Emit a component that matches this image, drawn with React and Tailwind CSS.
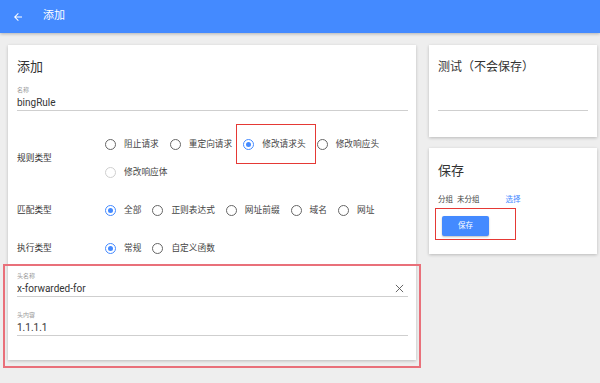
import React from "react";

const Radio = ({ checked, disabled }) => (
  <span
    className={
      checked
        ? "w-[11px] h-[11px] rounded-full border-[1.3px] border-[#448aff] flex items-center justify-center shrink-0"
        : disabled
        ? "w-[11px] h-[11px] rounded-full border-[1.3px] border-[#cfcfcf] flex items-center justify-center shrink-0"
        : "w-[11px] h-[11px] rounded-full border-[1.3px] border-[#666666] flex items-center justify-center shrink-0"
    }
  >
    {checked && <span className="w-[5px] h-[5px] rounded-full bg-[#448aff]" />}
  </span>
);

const RadioItem = ({ label, checked, disabled }) => (
  <div className="flex items-center h-[28px] mr-[11px]">
    <Radio checked={checked} disabled={disabled} />
    <span className="ml-[8px] text-[8.7px] leading-[12px] text-[#444]">{label}</span>
  </div>
);

const Section = ({ label, children }) => (
  <div className="flex items-center">
    <div className="w-[88px] shrink-0 text-[8.7px] leading-[12px] text-[#333]">{label}</div>
    <div className="flex flex-wrap flex-1">{children}</div>
  </div>
);

const Field = ({ label, value, clear }) => (
  <div className="flex flex-col">
    <div className="text-[6px] leading-[8px] text-[#9a9a9a]">{label}</div>
    <div className="flex items-center justify-between border-b border-[#cfcfcf] mt-[2px] pb-[1px]">
      <span className="text-[10px] leading-[13px] text-[#333]">{value}</span>
      {clear && (
        <svg viewBox="0 0 10 10" className="w-[9px] h-[9px] mr-[4px]" fill="none" stroke="#555" strokeWidth="1">
          <path d="M1 1 9 9M9 1 1 9" />
        </svg>
      )}
    </div>
  </div>
);

export default function App() {
  return (
    <div className="relative w-[600px] h-[383px] overflow-hidden bg-[#eeeeee] font-['Roboto','Noto_Sans_CJK_SC',sans-serif]">
      <div className="h-[33px] bg-[#448aff] flex items-center shadow-[0_1px_3px_rgba(0,0,0,0.25)] relative z-10">
        <svg viewBox="0 0 24 24" className="w-[12px] h-[12px] ml-[12px]" fill="#ffffff">
          <path d="M20 11H7.83l5.59-5.59L12 4l-8 8 8 8 1.41-1.41L7.83 13H20v-2z" />
        </svg>
        <span className="ml-[19px] text-[11px] text-white">添加</span>
      </div>

      <div className="flex items-start pt-[12px] pl-[8px] gap-[13px]">
        <div className="w-[408px] h-[315px] bg-white shadow-[0_1px_3px_rgba(0,0,0,0.22)] pl-[9px] pr-[8px] pt-[14px] flex flex-col">
          <div className="text-[13px] leading-[16px] text-[#333]">添加</div>
          <div className="mt-[11px]">
            <Field label="名称" value="bingRule" />
          </div>
          <div className="mt-[19px]">
            <Section label="规则类型">
              <RadioItem label="阻止请求" />
              <RadioItem label="重定向请求" />
              <RadioItem label="修改请求头" checked />
              <RadioItem label="修改响应头" />
              <RadioItem label="修改响应体" disabled />
            </Section>
          </div>
          <div className="mt-[10px]">
            <Section label="匹配类型">
              <RadioItem label="全部" checked />
              <RadioItem label="正则表达式" />
              <RadioItem label="网址前缀" />
              <RadioItem label="域名" />
              <RadioItem label="网址" />
            </Section>
          </div>
          <div className="mt-[10px]">
            <Section label="执行类型">
              <RadioItem label="常规" checked />
              <RadioItem label="自定义函数" />
            </Section>
          </div>
          <div className="mt-[10px]">
            <Field label="头名称" value="x-forwarded-for" clear />
          </div>
          <div className="mt-[14px]">
            <Field label="头内容" value="1.1.1.1" />
          </div>
        </div>

        <div className="w-[168px] flex flex-col gap-[11px]">
          <div className="h-[92px] bg-white shadow-[0_1px_3px_rgba(0,0,0,0.22)] pl-[9px] pr-[9px] pt-[14px]">
            <div className="text-[12px] leading-[16px] text-[#333]">测试（不会保存）</div>
            <div className="mt-[35px] border-b border-[#cfcfcf]" />
          </div>
          <div className="h-[106px] bg-white shadow-[0_1px_3px_rgba(0,0,0,0.22)] pl-[9px] pr-[9px] pt-[15px]">
            <div className="text-[13px] leading-[16px] text-[#333]">保存</div>
            <div className="mt-[16px] flex items-center text-[7.5px] leading-[10px]">
              <span className="text-[#444]">分组</span>
              <span className="ml-[4px] text-[#444]">未分组</span>
              <span className="ml-[26px] text-[#448aff]">选择</span>
            </div>
            <button className="mt-[11px] ml-[4px] w-[47px] h-[20px] rounded-[2px] bg-[#448aff] text-white text-[7.5px] shadow-[0_1px_2px_rgba(0,0,0,0.25)]">
              保存
            </button>
          </div>
        </div>
      </div>

      <div className="absolute left-[236px] top-[124px] w-[80px] h-[40px] border border-[#e53935]" />
      <div className="absolute left-[435px] top-[208px] w-[81px] h-[32px] border border-[#e53935]" />
      <div className="absolute left-[3px] top-[264px] w-[418px] h-[104px] border-2 border-[#e9707a]" />
    </div>
  );
}
